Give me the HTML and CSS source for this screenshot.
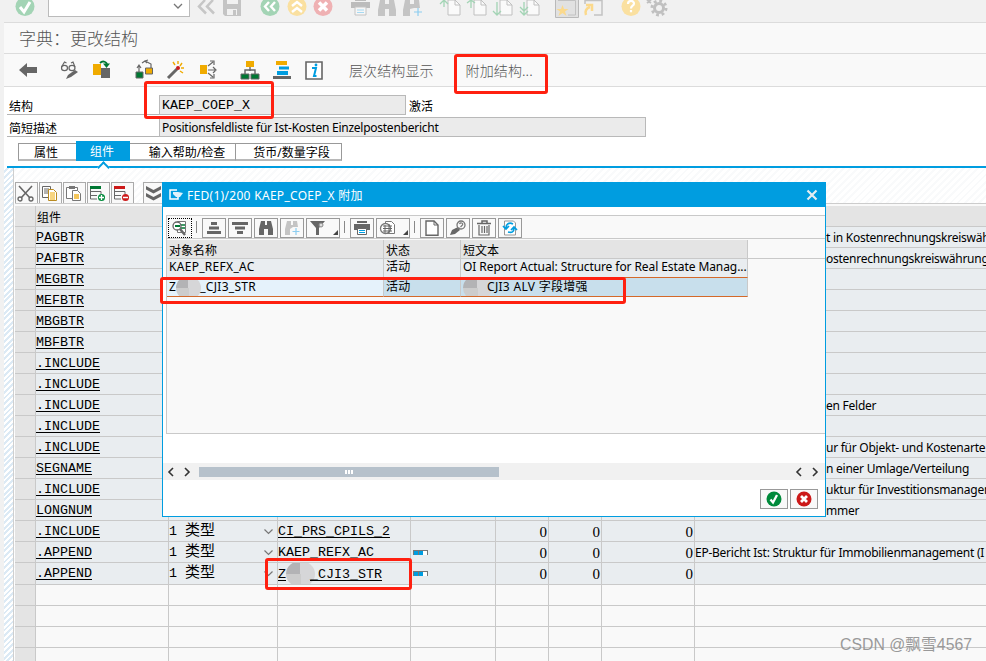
FILE: index.html
```html
<!DOCTYPE html>
<html lang="zh-CN">
<head>
    <meta charset="UTF-8">
    <meta name="viewport" content="width=device-width, initial-scale=1.0">
    <title>字典：更改结构</title>
    <link rel="stylesheet" href="styles.css">
</head>
<body>
<div class="window">
    <div class="menubar">
        <svg class="ico" viewBox="0 0 26 22"><circle cx="13" cy="6.500" r="9.500" fill="#a3d4b5"/><path d="M8 7l4 5 6-10" fill="none" stroke="#fff" stroke-width="3"/></svg>
        <div class="combo"><svg width="10" height="7" viewBox="0 0 10 7"><path d="M1 1l4 4 4-4" fill="none" stroke="#777" stroke-width="1.300"/></svg></div>
        <svg class="ico ml3" viewBox="0 0 26 22"><path d="M12 0L6 6.500l7 7M20 0l-6 6.500 7 7" fill="none" stroke="#c6c6c6" stroke-width="2.500"/></svg>
        <svg class="ico" viewBox="0 0 26 22"><path d="M4 0h18v16H6l-2-2z" fill="#c4c4c4"/><path d="M8 0h11v4H8zM8 9h10v6H8z" fill="#f1f1f1"/><path d="M14 10h3v5h-3z" fill="#c4c4c4"/></svg>
        <svg class="ico ml12" viewBox="0 0 26 22"><circle cx="13" cy="6.500" r="9.500" fill="#a3d4b5"/><path d="M12 2L8 6.500l4 4.500M18 2l-4 4.500 4 4.500" fill="none" stroke="#fff" stroke-width="2.400"/></svg>
        <svg class="ico ml1" viewBox="0 0 26 22"><circle cx="13" cy="6.500" r="9.500" fill="#fae0a0"/><path d="M8 6l5-4 5 4M8 12l5-4 5 4" fill="none" stroke="#fff" stroke-width="2.400"/></svg>
        <svg class="ico" viewBox="0 0 26 22"><circle cx="13" cy="6.500" r="9.500" fill="#efb1b3"/><path d="M9 2.500l8 8M17 2.500l-8 8" stroke="#fff" stroke-width="3.500"/></svg>
        <svg class="ico ml11" viewBox="0 0 26 22"><path d="M4 2h19v6H4zM8 0h11v1H8z" fill="#bcbcbc"/><path d="M8 7h11v8H8z" fill="#f6f6f6" stroke="#c4c4c4"/><path d="M10 10h7M10 12.500h7" stroke="#a6d9f2"/></svg>
        <svg class="ico ml1" viewBox="0 0 26 22"><path d="M6 0h5v4h4V0h5l2 10v6h-7V9h-4v7H4v-6z" fill="#c4c4c4"/></svg>
        <svg class="ico" viewBox="0 0 26 22"><path d="M5 0h5v4h4V0h5l1 8h-6l-4 1v7H3v-6z" fill="#c4c4c4"/><path d="M18 8v8M14 12h8" stroke="#8dcdf0" stroke-width="1.200"/></svg>
        <svg class="ico ml13" viewBox="0 0 26 22"><path d="M9 0h7l5 5v10H9z" fill="#fafafa" stroke="#c0c0c0"/><path d="M16 0v5h5" fill="none" stroke="#c0c0c0"/><path d="M5 7V0M1 4l4-4 4 4" fill="none" stroke="#a3d4b5" stroke-width="1.300"/></svg>
        <svg class="ico" viewBox="0 0 26 22"><path d="M9 0h7l5 5v10H9z" fill="#fafafa" stroke="#c0c0c0"/><path d="M16 0v5h5" fill="none" stroke="#c0c0c0"/><path d="M6 8V0M2 3l4-3 4 3" fill="none" stroke="#a3d4b5" stroke-width="1.300"/></svg>
        <svg class="ico" viewBox="0 0 26 22"><path d="M9 0h7l5 5v10H9z" fill="#fafafa" stroke="#c0c0c0"/><path d="M16 0v5h5" fill="none" stroke="#c0c0c0"/><path d="M6 2v13M2 11l4 4 4-4" fill="none" stroke="#a3d4b5" stroke-width="1.300"/></svg>
        <svg class="ico ml1" viewBox="0 0 26 22"><path d="M9 0h7l5 5v10H9z" fill="#fafafa" stroke="#c0c0c0"/><path d="M16 0v5h5" fill="none" stroke="#c0c0c0"/><path d="M6 2v12M2 7l4 4 4-4M2 11l4 4 4-4" fill="none" stroke="#a3d4b5" stroke-width="1.300"/></svg>
        <svg class="ico ml10" viewBox="0 0 26 22"><path d="M1.500-2v19.500h23V-2" fill="#e1e1e1" stroke="#b9b9b9"/><path d="M4 .500h17.500v14.500H14" fill="none" stroke="#c2c2c2"/><path d="M8.500 5l1.500 4h4.500L11 11.500 12.500 16l-4-3-4 3L6 11.500 2.500 9H7z" fill="#fbd98c"/></svg>
        <svg class="ico" viewBox="0 0 26 22"><path d="M5 4V.500h17V15h-8" fill="none" stroke="#c2c2c2" stroke-width="1.500"/><path d="M6 15q-2-6 4-8M6 5h6v6" fill="none" stroke="#fbd98c" stroke-width="2.500"/></svg>
        <svg class="ico ml12" viewBox="0 0 26 22"><circle cx="13" cy="6.500" r="9.500" fill="#fae0a0"/><path d="M10 4c0-4 6-4 6-.5 0 2.500-3 2-3 5M13 10v2.200" fill="none" stroke="#fff" stroke-width="2.200"/></svg>
        <svg class="ico" viewBox="0 0 26 22"><circle cx="15" cy="8" r="4.500" fill="none" stroke="#c0c0c0" stroke-width="3"/><circle cx="15" cy="8" r="7" fill="none" stroke="#c0c0c0" stroke-width="3" stroke-dasharray="2.750"/><path d="M3 0l4 3M3 3l4-3" stroke="#c0c0c0" stroke-width="2"/></svg>
    </div>
    <h1 class="title">字典：更改结构</h1>
    <div class="toolbar">
        <svg class="tool" viewBox="0 0 24 24"><path d="M3 12l8-7v4h10v6H11v4z" fill="#666"/></svg>
        <svg class="tool ml17" viewBox="0 0 24 24"><g fill="none" stroke="#666" stroke-width="1.200"><ellipse cx="7.500" cy="10" rx="3" ry="2.600"/><ellipse cx="15" cy="10" rx="3" ry="2.600"/><path d="M4.500 9l3-5 2 1M18 9l-2-5-2 1"/></g><path d="M9 21l2-4 7-5 3 2-7 5z" fill="#666"/></svg>
        <svg class="tool ml9" viewBox="0 0 24 24"><path d="M3 6h8v11H3z" fill="#f0ab00"/><path d="M11 10h9v10h-9z" fill="#666"/><path d="M10 5c3-3 7-1 7 2" fill="none" stroke="#007833" stroke-width="1.800"/><path d="M13 5.500h7L16.500 10z" fill="#007833"/></svg>
        <svg class="tool ml18" viewBox="0 0 24 24"><path d="M7 14V8M5 10l2-3 2 3M10 5l3-2 6 3v4M15 5l-2-2 3-1" fill="none" stroke="#666" stroke-width="1.200"/><path d="M4 14h7v6H4z" fill="#007833" stroke="#666"/><path d="M13.500 10h7v6h-7z" fill="#f0ab00" stroke="#666"/></svg>
        <svg class="tool ml8" viewBox="0 0 24 24"><path d="M4 20l9-9" stroke="#666" stroke-width="3"/><circle cx="14" cy="10" r="2" fill="#cc1919"/><path d="M14 3v3M18 5l-2 3M9 4l2 3M17 10h3M16 13l3 2" stroke="#f0ab00" stroke-width="1.400"/></svg>
        <svg class="tool ml8" viewBox="0 0 24 24"><path d="M4 7h7v9H4z" fill="#f0ab00"/><path d="M12 8l5-4M14 3h4v4M12 12h7M17 9l3 3-3 3M12 15l5 4M14 20h4v-4" fill="none" stroke="#666" stroke-width="1.200"/></svg>
        <svg class="tool ml18" viewBox="0 0 24 24"><path d="M8 3h8v6H8z" fill="#f0ab00"/><path d="M12 9v4M7 16v-4h10v4" fill="none" stroke="#666" stroke-width="1.400"/><path d="M3 16h8v5H3zM13 16h8v5h-8z" fill="#007833" stroke="#666"/></svg>
        <svg class="tool ml8" viewBox="0 0 24 24"><path d="M6 3h11v4H6z" fill="#f0ab00"/><path d="M9 8.500h10v3H9zM7 13h11v4H7z" fill="#009de0"/><path d="M3 18h18v3H3z" fill="#666"/></svg>
        <svg class="tool ml8" viewBox="0 0 24 24"><path d="M4 4h16v17H4z" fill="#fff" stroke="#666" stroke-width="1.600"/><path d="M10 10h4l-2 8h2.500" fill="none" stroke="#009de0" stroke-width="2"/><circle cx="14" cy="7" r="1.400" fill="#009de0"/></svg>
        <span class="link">层次结构显示</span>
        <span class="link append">附加结构...</span>
    </div>

    <div class="fields">
        <div class="field"><label>结构</label><div class="value mono short">KAEP_COEP_X</div><span class="status">激活</span></div>
        <div class="field"><label>简短描述</label><div class="value long">Positionsfeldliste für Ist-Kosten Einzelpostenbericht</div></div>
    </div>
    <div class="tabs">
        <div class="tab t1">属性</div>
        <div class="tab t2 active">组件</div>
        <div class="tab t3">输入帮助/检查</div>
        <div class="tab t4">货币/数量字段</div>
    </div>

    <div class="panel">
        <div class="hatch"></div>
        <div class="content">
            <div class="gridbar">
                <div class="btn"><svg viewBox="0 0 20 20"><path d="M3 3l11 12M16 3L5 15" stroke="#666" stroke-width="1.600"/><circle cx="4" cy="16" r="2" fill="none" stroke="#666" stroke-width="1.300"/><circle cx="15" cy="16" r="2" fill="none" stroke="#666" stroke-width="1.300"/></svg></div>
                <div class="btn"><svg viewBox="0 0 20 20"><path d="M2.500 3.500h8v11h-8zM4 6h5M4 8h5M4 10h5" fill="#fff" stroke="#666"/><path d="M8.500 6.500h5l3 3v8h-8z" fill="#fff" stroke="#b98a20"/><path d="M10 10h5M10 12h5M10 14h5M10 16h5" stroke="#f0ab00"/></svg></div>
                <div class="btn"><svg viewBox="0 0 20 20"><path d="M2.500 4.500h11v11h-11z" fill="#fff" stroke="#777"/><path d="M5 3h6v3H5z" fill="#777"/><path d="M8.500 7.500h5l3 3v7h-8z" fill="#fff" stroke="#777"/><path d="M10 11h5v5h-5z" fill="#f4c65a"/></svg></div>
                <div class="btn"><svg viewBox="0 0 20 20"><path d="M2 3h11v3H2z" fill="#007833"/><path d="M2.500 6v10H9M2 8.500h11V11M2 12.500h7" fill="none" stroke="#666"/><circle cx="13.500" cy="14.500" r="3.500" fill="#008a3b"/><path d="M11 14.500h5M13.500 12v5" stroke="#fff" stroke-width="1.300"/></svg></div>
                <div class="btn"><svg viewBox="0 0 20 20"><path d="M2 3h11v3H2z" fill="#cc1919"/><path d="M2.500 6v10H9M2 8.500h11V11M2 12.500h7" fill="none" stroke="#666"/><circle cx="13.500" cy="14.500" r="3.500" fill="#cc1919"/><path d="M11 14.500h5" stroke="#fff" stroke-width="1.500"/></svg></div>
                <div class="btn wide"><svg viewBox="0 0 20 20"><path d="M2 3l7.500 4L17 3v3.500l-7.500 4L2 6.500zM2 10l7.500 4 7.500-4v3.500l-7.500 4-7.500-4z" fill="#666"/></svg></div>
            </div>
            <table class="grid">
                <colgroup><col class="c0"><col class="c1"><col class="c2"><col class="c3"><col class="c4"><col class="c5"><col class="c5"><col class="c6"><col></colgroup>
                <thead><tr><th></th><th>组件</th><th></th><th></th><th></th><th></th><th></th><th></th><th></th></tr></thead>
                <tbody id="rows"></tbody>
            </table>
        </div>
    </div>
</div>

<div class="dialog">
    <div class="dlg-title">
        <svg width="16" height="14" viewBox="0 0 16 14"><path d="M9 2H2v9h8V9" fill="none" stroke="#fff" stroke-width="1.500"/><path d="M5 4h5l5 1-3 4H8L5 6z" fill="#dff2fb"/></svg>
        <span>FED(1)/200 KAEP_COEP_X 附加</span>
        <svg class="close" width="12" height="12" viewBox="0 0 12 12"><path d="M1.500 1.500l9 9M10.500 1.500l-9 9" stroke="#e6edf0" stroke-width="2.200"/></svg>
    </div>
    <div class="dlg-body">
        <div class="dlg-bar">
            <div class="dbtn focus"><svg viewBox="0 0 20 16"><path d="M7.500 1.500h8v11h-8z" fill="#fff" stroke="#777"/><path d="M8 5h7M8 8h7" stroke="#007833" stroke-width="1.500"/><circle cx="7" cy="6" r="4" fill="#fff" stroke="#666" stroke-width="1.300"/><path d="M5 6h5" stroke="#007833" stroke-width="2"/><path d="M10 9l5 6" stroke="#666" stroke-width="2.500"/></svg></div>
            <i class="sep"></i>
            <div class="dbtn"><svg viewBox="0 0 20 16"><path d="M7 2h6v3H7zM5 6.500h10v3H5zM3 11h14v3H3z" fill="#666"/></svg></div>
            <div class="dbtn"><svg viewBox="0 0 20 16"><path d="M2 2h16v3H2zM5 6.500h10v3H5zM7 11h6v3H7z" fill="#666"/></svg></div>
            <div class="dbtn"><svg viewBox="0 0 20 16"><path d="M5 1h4v4h2V1h4l2 8v6h-5V9H8v6H3V9z" fill="#666"/></svg></div>
            <div class="dbtn"><svg viewBox="0 0 20 16"><path d="M5 1h4v4h2V1h4l1 6h-5L8 9v6H3V9z" fill="#c4c4c4"/><path d="M14 8v7M10.500 11.500h7" stroke="#8dcdf0" stroke-width="1.200"/></svg></div>
            <div class="dbtn split"><svg viewBox="0 0 20 16"><path d="M2 1h15l-6 7v7H8V8z" fill="#666"/><circle cx="13" cy="5" r="2" fill="#ddd" stroke="#888"/></svg><b class="drop"></b></div>
            <i class="sep"></i>
            <div class="dbtn"><svg viewBox="0 0 20 16"><path d="M5 1h10v2H5zM2 4h16v6H2z" fill="#666"/><path d="M5.500 8.500h9v6h-9z" fill="#fff" stroke="#666"/><path d="M7 10.500h6M7 12.500h6" stroke="#009de0"/></svg></div>
            <div class="dbtn split"><svg viewBox="0 0 20 16"><path d="M7.500 1.500h6l3 3v9h-9z" fill="#fff" stroke="#777"/><circle cx="7.500" cy="8.500" r="5" fill="#fff" stroke="#777" stroke-width="1.300"/><path d="M5 6h9M5 8.500h9M5 11h9M7 5v8M11 4v9" fill="none" stroke="#666"/></svg><b class="drop"></b></div>
            <i class="sep"></i>
            <div class="dbtn"><svg viewBox="0 0 20 16"><path d="M4 1h8l4 4v10.300H4z" fill="#fff" stroke="#666" stroke-width="1.400"/><path d="M12 1v4h4" fill="none" stroke="#666"/></svg></div>
            <div class="dbtn"><svg viewBox="0 0 20 16"><path d="M2 15l2-5 6-3 2 3-5 4z" fill="#666"/><circle cx="13" cy="5" r="4" fill="none" stroke="#777" stroke-width="1.300"/><path d="M11.500 4c1-2 4-1 3 1l-2 2M9 9l3-1" fill="none" stroke="#777" stroke-width="1.200"/></svg></div>
            <div class="dbtn"><svg viewBox="0 0 20 16"><path d="M3 3.500h14M8 3V1h5v2" fill="none" stroke="#666" stroke-width="1.500"/><path d="M5 5v10h10V5M8 6v7M10.500 6v7M13 6v7" fill="none" stroke="#666" stroke-width="1.200"/></svg></div>
            <div class="dbtn"><svg viewBox="0 0 20 16"><path d="M4.500 1h9l2 2v12h-11z" fill="#fff" stroke="#999"/><path d="M13 4c-4-2-7 0-7 4M3 6l3 3 3-3M8 12c4 1 6 0 6-4M17 10l-3-3-3 3" fill="none" stroke="#009de0" stroke-width="1.700"/></svg></div>
        </div>
        <div class="alv">
            <div class="alv-row head"><span>对象名称</span><span>状态</span><span>短文本</span></div>
            <div class="alv-row first"><span>KAEP_REFX_AC</span><span>活动</span><span class="clip">OI Report Actual: Structure for Real Estate Manag...</span></div>
            <div class="alv-row sel"><span>Z<i class="mask"></i>_CJI3_STR</span><span>活动</span><span><i class="mask big"></i>CJI3 ALV 字段增强</span></div>
        </div>
    </div>
    <div class="scroll">
        <svg class="start" width="32" height="10" viewBox="0 0 32 10"><path d="M8 1L4 5l4 4M20 1l4 4-4 4" fill="none" stroke="#333" stroke-width="1.600"/></svg>
        <div class="thumb"><i></i><i></i><i></i></div>
        <svg class="end" width="32" height="10" viewBox="0 0 32 10"><path d="M8 1L4 5l4 4M20 1l4 4-4 4" fill="none" stroke="#333" stroke-width="1.600"/></svg>
    </div>
    <div class="dlg-foot">
        <div class="fbtn"><svg width="16" height="16" viewBox="0 0 16 16"><circle cx="8" cy="8" r="7.500" fill="#008a3b"/><path d="M4.500 8.500L7 11.500l4-7.500" fill="none" stroke="#fff" stroke-width="2.300"/></svg></div>
        <div class="fbtn"><svg width="16" height="16" viewBox="0 0 16 16"><circle cx="8" cy="8" r="7.500" fill="#cc1919"/><path d="M5 5l6 6M11 5l-6 6" stroke="#fff" stroke-width="2.800"/></svg></div>
    </div>
</div>

<!-- red callouts -->
<div class="mark m1"></div>
<div class="mark m2"></div>
<div class="mark m3"></div>
<div class="mark m4"></div>
<div class="watermark">CSDN @飘雪4567</div>

<script>
    // name, type name, has structure icon, description, description starts behind the dialog
    let data = [
        ['PAGBTR', '', 0, 't in Kostenrechnungskreiswäh', 1],
        ['PAFBTR', '', 0, 'ostenrechnungskreiswährung', 1],
        ['MEGBTR'], ['MEFBTR'], ['MBGBTR'], ['MBFBTR'],
        ['.INCLUDE'], ['.INCLUDE'],
        ['.INCLUDE', '', 0, 'en Felder', 1],
        ['.INCLUDE'],
        ['.INCLUDE', '', 0, 'ur für Objekt- und Kostenarte', 1],
        ['SEGNAME', '', 0, 'n einer Umlage/Verteilung', 1],
        ['.INCLUDE', '', 0, 'uktur für Investitionsmanagen', 1],
        ['LONGNUM', '', 0, 'mmer', 1],
        ['.INCLUDE', 'CI_PRS_CPILS_2'],
        ['.APPEND', 'KAEP_REFX_AC', 1, 'EP-Bericht Ist: Struktur für Immobilienmanagement (I'],
        ['.APPEND', 'Z<i class="mask big"></i>_CJI3_STR', 1],
        [], [], [], []
    ];
    let chevron = '<svg width="9" height="6" viewBox="0 0 9 6"><path d="M.5.500l4 4 4-4" fill="none" stroke="#777" stroke-width="1.200"/></svg>';
    let icon = '<svg class="struct" width="15" height="5" viewBox="0 0 15 5"><path d="M0 0h15v5H0z" fill="#777"/><path d="M1 1h4v4H1zM6 1h4v4H6z" fill="#009de0"/><path d="M10 1h4v4h-4z" fill="#fff"/></svg>';

    document.getElementById('rows').innerHTML = data.map(([name, type, struct, text, behind]) => {
        let n = type ? '0' : '';
        return `<tr class="${name ? '' : 'empty'}"><td></td>
            <td>${name ? `<u>${name}</u>` : ''}</td>
            <td>${type ? `<div class="kind">1 <span>类型</span>${chevron}</div>` : ''}</td>
            <td>${type ? `<u>${type}</u>` : ''}</td>
            <td>${struct ? icon : ''}</td>
            <td class="num">${n}</td><td class="num">${n}</td><td class="num">${n}</td>
            <td class="desc ${behind ? 'behind' : ''}">${text || ''}</td></tr>`;
    }).join('');
</script>
</body>
</html>
```
FILE: styles.css
```css
* {
    box-sizing: border-box;
}

body {
    margin: 0;
    width: 986px;
    height: 661px;
    overflow: hidden;
    position: relative;
    background: #fff;
    color: #000;
    font: 12px "Noto Sans", "Noto Sans CJK SC", sans-serif;
    letter-spacing: -0.25px;
}

svg {
    display: block;
    flex: none;
}

.window {
    height: 661px;
    overflow: hidden;
    border-left: 4px solid #f1f1f1;
    background: #fff;
}

.menubar {
    display: flex;
    height: 23px;
    padding-left: 8px;
    background: #f1f1f1;
    border-bottom: 1px solid #dcdcdc;
}

.ico {
    width: 26px;
    height: 22px;
}

.ml1 { margin-left: 1px; }
.ml3 { margin-left: 3px; }
.ml8 { margin-left: 8px; }
.ml9 { margin-left: 9px; }
.ml10 { margin-left: 10px; }
.ml11 { margin-left: 11px; }
.ml12 { margin-left: 12px; }
.ml13 { margin-left: 13px; }
.ml17 { margin-left: 17px; }
.ml18 { margin-left: 18px; }

.combo {
    width: 142px;
    height: 17px;
    margin-left: 10px;
    padding: 3px 6px 0 0;
    display: flex;
    justify-content: flex-end;
    background: #fff;
    border: 1px solid #bbb;
    border-top: none;
}

.title {
    height: 31px;
    margin: 0;
    padding-left: 15px;
    background: #f9f9f9;
    border-bottom: 1px solid #dcdcdc;
    color: #555;
    font: 300 17px/29px "Noto Sans CJK SC", sans-serif;
    letter-spacing: 0;
}

.toolbar {
    display: flex;
    align-items: center;
    height: 33px;
    padding-left: 12px;
    background: #f9f9f9;
    border-bottom: 1px solid #dcdcdc;
}

.tool {
    width: 24px;
    height: 24px;
}

.link {
    margin-left: 23px;
    color: #555;
    font: 300 14px/30px "Noto Sans CJK SC", sans-serif;
    letter-spacing: 0.1px;
}

.append {
    margin-left: 32px;
}

.fields {
    height: 54px;
    padding: 8px 0 0 3px;
}

.field {
    display: flex;
    height: 20px;
    margin-bottom: 2px;
}

.field label {
    width: 152px;
    padding: 3px 0 0 2px;
    line-height: 17px;
    letter-spacing: 0;
    border-bottom: 1px solid #b5b5b5;
}

.value {
    height: 20px;
    padding-left: 2px;
    line-height: 19px;
    background: #ebebeb;
    border: 1px solid #b9b9b9;
}

.mono {
    font-family: "Liberation Mono", monospace;
    font-size: 13.33px;
    letter-spacing: 0;
}

.short { width: 247px; }
.long { width: 487px; }

.status {
    padding: 3px 0 0 3px;
    line-height: 17px;
    letter-spacing: 0;
}

.tabs {
    display: flex;
    align-items: flex-end;
    height: 27px;
    padding: 0 0 5px 11px;
    margin-left: 3px;
    border-bottom: 2px solid #009de0;
}

.tab {
    height: 18px;
    line-height: 17px;
    text-align: center;
    letter-spacing: 0;
    background: #fff;
    border: 1px solid #999;
    border-bottom-width: 2px;
    border-bottom-color: #b8b8b8;
    border-right: none;
}

.tab.active {
    position: relative;
    height: 20px;
    line-height: 21px;
    border: none;
    background: #009de0;
    color: #fff;
}

/* notch in the blue line below the open tab */
.tab.active::after {
    content: "";
    position: absolute;
    left: 23px;
    top: 22px;
    width: 7px;
    height: 7px;
    background: #fff;
    border-left: 2px solid #009de0;
    border-top: 2px solid #009de0;
    transform: rotate(45deg);
}

.t1 { width: 58px; padding-right: 3px; }
.t2 { width: 54px; padding-right: 2px; }
.t3 { width: 105px; padding-left: 9px; border-left: none; }
.t4 { width: 107px; padding-left: 6px; border-right: 1px solid #999; }

.panel {
    display: flex;
    height: 493px;
    background: repeating-linear-gradient(135deg, #fff 0 3px, #f9fafb 3px 5px);
}

.hatch {
    width: 10px;
    border-right: 1px solid #cfcfcf;
    background: repeating-linear-gradient(135deg, #fff 0 2px, #dceaf5 2px 4px);
}

.content {
    position: relative;
    flex: 1;
    min-width: 0;
    padding: 14px 0 0 1px;
}

.gridbar {
    display: flex;
    gap: 1px;
    height: 21px;
}

.btn {
    width: 23px;
    height: 21px;
    background: #f9f9f9;
    border: 1px solid #aaa;
    border-bottom: none;
}

.btn svg {
    width: 20px;
    height: 20px;
}

.btn.wide {
    width: 30px;
    margin-left: 8px;
}

.grid {
    width: 972px;
    table-layout: fixed;
    border-collapse: separate;
    border-spacing: 0;
    border-top: 1px solid #ccc;
    padding-top: 2px;
    background: #f9f9f9;
    font-family: "Liberation Mono", "Noto Sans CJK SC", monospace;
    font-size: 13.33px;
    letter-spacing: 0;
}

.c0 { width: 21px; }
.c1 { width: 133px; }
.c2 { width: 109px; }
.c3 { width: 133px; }
.c4 { width: 85px; }
.c5 { width: 53px; }
.c6 { width: 93px; }

th, td {
    height: 21px;
    padding: 2px 0 0 0;
    line-height: 18px;
    overflow: hidden;
    white-space: nowrap;
    text-align: left;
    border-right: 1px solid #c9c9c9;
    border-bottom: 1px solid #c9c9c9;
}

td {
    background: #e9edf0;
}

th {
    padding-left: 1px;
    border-right-color: #e4e4e4;
    background: #e4e4e4;
    font: 12px/18px "Noto Sans CJK SC", sans-serif;
}

th:first-child {
    border-right-color: #c9c9c9;
}

.empty td {
    background: #f9f9f9;
}

td:first-child, .empty td:first-child {
    background: #e4e4e4;
}

u {
    text-underline-offset: 2px;
}

.num {
    padding-right: 1px;
    text-align: right;
    font-family: "Liberation Serif", serif;
    font-size: 15px;
}

.kind {
    display: flex;
    align-items: center;
    height: 18px;
    white-space: pre;
}

.kind span {
    font-size: 15px;
}

.kind svg {
    margin-left: auto;
    margin-right: 4px;
}

.struct {
    margin: -2px 0 0 2px;
}

.desc {
    font-family: "Noto Sans", sans-serif;
    font-size: 12px;
    letter-spacing: -0.25px;
}

.desc.behind {
    padding-left: 131px;
}

.dialog {
    position: absolute;
    left: 162px;
    top: 182px;
    width: 664px;
    height: 335px;
    background: #fff;
    border: 1px solid #009de0;
}

.dlg-title {
    display: flex;
    align-items: center;
    height: 24px;
    padding: 0 7px 0 5px;
    background: #009de0;
    color: #fff;
    letter-spacing: 0.3px;
}

.dlg-title span {
    margin-left: 3px;
}

.close {
    margin-left: auto;
}

.dlg-body {
    height: 219px;
    margin: 8px 0 0 3px;
    background: #f9f9f9;
    border: 1px solid #c9c9c9;
    border-right: none;
}

.dlg-bar {
    display: flex;
    height: 23px;
    gap: 2px;
    padding: 2px 0 0 1px;
    border-bottom: 1px solid #c9c9c9;
}

.dbtn {
    display: flex;
    width: 24px;
    height: 20px;
    padding: 1px;
    background: #f9f9f9;
    border: 1px solid #999;
}

.dbtn svg {
    width: 20px;
    height: 16px;
}

.focus {
    padding: 1px;
    border: 1px dotted #000;
}

.split {
    width: 34px;
}

.drop {
    align-self: flex-end;
    margin: 0 0 1px 5px;
    border-left: 5px solid transparent;
    border-bottom: 5px solid #444;
}

.sep {
    width: 1px;
    height: 12px;
    margin: 3px 3px 0 2px;
    background: #888;
}

.alv {
    margin-top: 1px;
}

.alv-row {
    display: grid;
    grid-template-columns: 217px 77px 287px;
    height: 19px;
    line-height: 16px;
    letter-spacing: 0.3px;
}

.alv-row span {
    padding-left: 2px;
    white-space: nowrap;
    overflow: hidden;
    background: #e9edf0;
    border-right: 1px solid #c9c9c9;
    border-bottom: 1px solid #c9c9c9;
}

.alv-row.head {
    line-height: 21px;
    border-bottom: 1px solid #c9c9c9;
}

.head span {
    border-bottom: none;
    background: #e4e4e4;
    letter-spacing: 0;
}

.alv-row .clip {
    letter-spacing: -0.08px;
}

.alv-row.first span {
    border-bottom-color: #d4692a;
}

.alv-row.sel span {
    background: #c8dfec;
    border-bottom-color: #d4692a;
    line-height: 18px;
}

.alv-row.sel span:first-child {
    background: #e5f2fb;
}

.mask {
    display: inline-block;
    width: 25px;
    height: 24px;
    margin: -4px -1px -4px 0;
    vertical-align: middle;
    border-radius: 50%;
    background: conic-gradient(#d6d6d8 50%, #ccc 0 75%, #b3b3b5 0);
}

.mask.big {
    width: 29px;
    height: 26px;
    margin: -4px -5px -4px 0;
}

.scroll {
    display: flex;
    align-items: center;
    height: 17px;
    margin-top: 29px;
    background: #f1f1f1;
}

.start {
    margin-left: 2px;
}

.thumb {
    display: flex;
    justify-content: center;
    align-items: center;
    gap: 1px;
    width: 300px;
    height: 10px;
    margin-left: 2px;
    background: #b6c1cb;
}

.thumb i {
    width: 2px;
    height: 4px;
    background: #fff;
}

.end {
    margin-left: auto;
}

.dlg-foot {
    display: flex;
    justify-content: flex-end;
    gap: 2px;
    padding: 9px 7px 0 0;
}

.fbtn {
    display: flex;
    align-items: center;
    justify-content: center;
    width: 28px;
    height: 20px;
    background: #f9f9f9;
    border: 1px solid #999;
}

.mark {
    position: absolute;
    border: 3px solid #ff2010;
    border-radius: 3px;
}

.m1 { left: 144px; top: 81px; width: 130px; height: 38px; }
.m2 { left: 454px; top: 54px; width: 94px; height: 40px; }
.m3 { left: 160px; top: 277px; width: 466px; height: 27px; }
.m4 { left: 265px; top: 558px; width: 147px; height: 32px; }

.watermark {
    position: absolute;
    right: 14px;
    top: 635px;
    color: #999;
    font: 15.8px/20px "Liberation Sans", "Noto Sans CJK SC", sans-serif;
    letter-spacing: 0;
}
```
